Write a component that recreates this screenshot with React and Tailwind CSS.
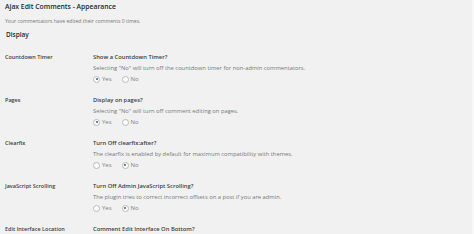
import React from "react";

const rows = [
  {
    label: "Countdown Timer",
    q: "Show a Countdown Timer?",
    d: "Selecting \"No\" will turn off the countdown timer for non-admin commentators.",
    yes: true,
  },
  {
    label: "Pages",
    q: "Display on pages?",
    d: "Selecting \"No\" will turn off comment editing on pages.",
    yes: true,
  },
  {
    label: "Clearfix",
    q: "Turn Off clearfix:after?",
    d: "The clearfix is enabled by default for maximum compatibility with themes.",
    yes: false,
  },
  {
    label: "JavaScript Scrolling",
    q: "Turn Off Admin JavaScript Scrolling?",
    d: "The plugin tries to correct incorrect offsets on a post if you are admin.",
    yes: false,
  },
  {
    label: "Edit Interface Location",
    q: "Comment Edit Interface On Bottom?",
    d: "Selecting \"Yes\" will move the edit interface to the bottom.",
    yes: false,
  },
];

function Radio({ checked, label }) {
  return (
    <span className="flex items-center gap-[2px]">
      <span className="flex h-[7px] w-[7px] items-center justify-center rounded-full border border-[#b4b9be] bg-white">
        {checked && <span className="h-[2px] w-[2px] rounded-full bg-[#3d5a80]" />}
      </span>
      <span className="text-[6px] text-[#808080]">{label}</span>
    </span>
  );
}

export default function App() {
  return (
    <div
      className="h-[234px] w-[474px] overflow-hidden border-r-2 border-[#f8f8f8] bg-[#f1f1f1] pl-[5px] pt-[2px] text-[#23282d]"
      style={{ fontFamily: '"Open Sans", "Liberation Sans", sans-serif' }}
    >
      <h1 className="text-[6.8px] font-semibold leading-[10px] text-[#23282d]">
        Ajax Edit Comments - Appearance
      </h1>
      <p className="mt-[5px] text-[5.1px] leading-[8px] text-[#777]">
        Your commentators have edited their comments 0 times.
      </p>
      <h2 className="mt-[5px] pl-[1px] text-[6.5px] font-semibold leading-[10px] text-[#23282d]">
        Display
      </h2>
      <div className="mt-[12px] flex flex-col gap-[11px]">
        {rows.map((r) => (
          <div key={r.label} className="grid grid-cols-[88px_1fr]">
            <div className="text-[5.5px] font-semibold leading-[11px] text-[#3c3c3c]">{r.label}</div>
            <div className="flex flex-col">
              <div className="text-[5.8px] font-semibold leading-[11px] text-[#3c3c3c]">{r.q}</div>
              <div className="text-[5.8px] leading-[11px] text-[#777]">{r.d}</div>
              <div className="flex h-[10px] items-center gap-[10px]">
                <Radio checked={r.yes} label="Yes" />
                <Radio checked={!r.yes} label="No" />
              </div>
            </div>
          </div>
        ))}
      </div>
    </div>
  );
}
